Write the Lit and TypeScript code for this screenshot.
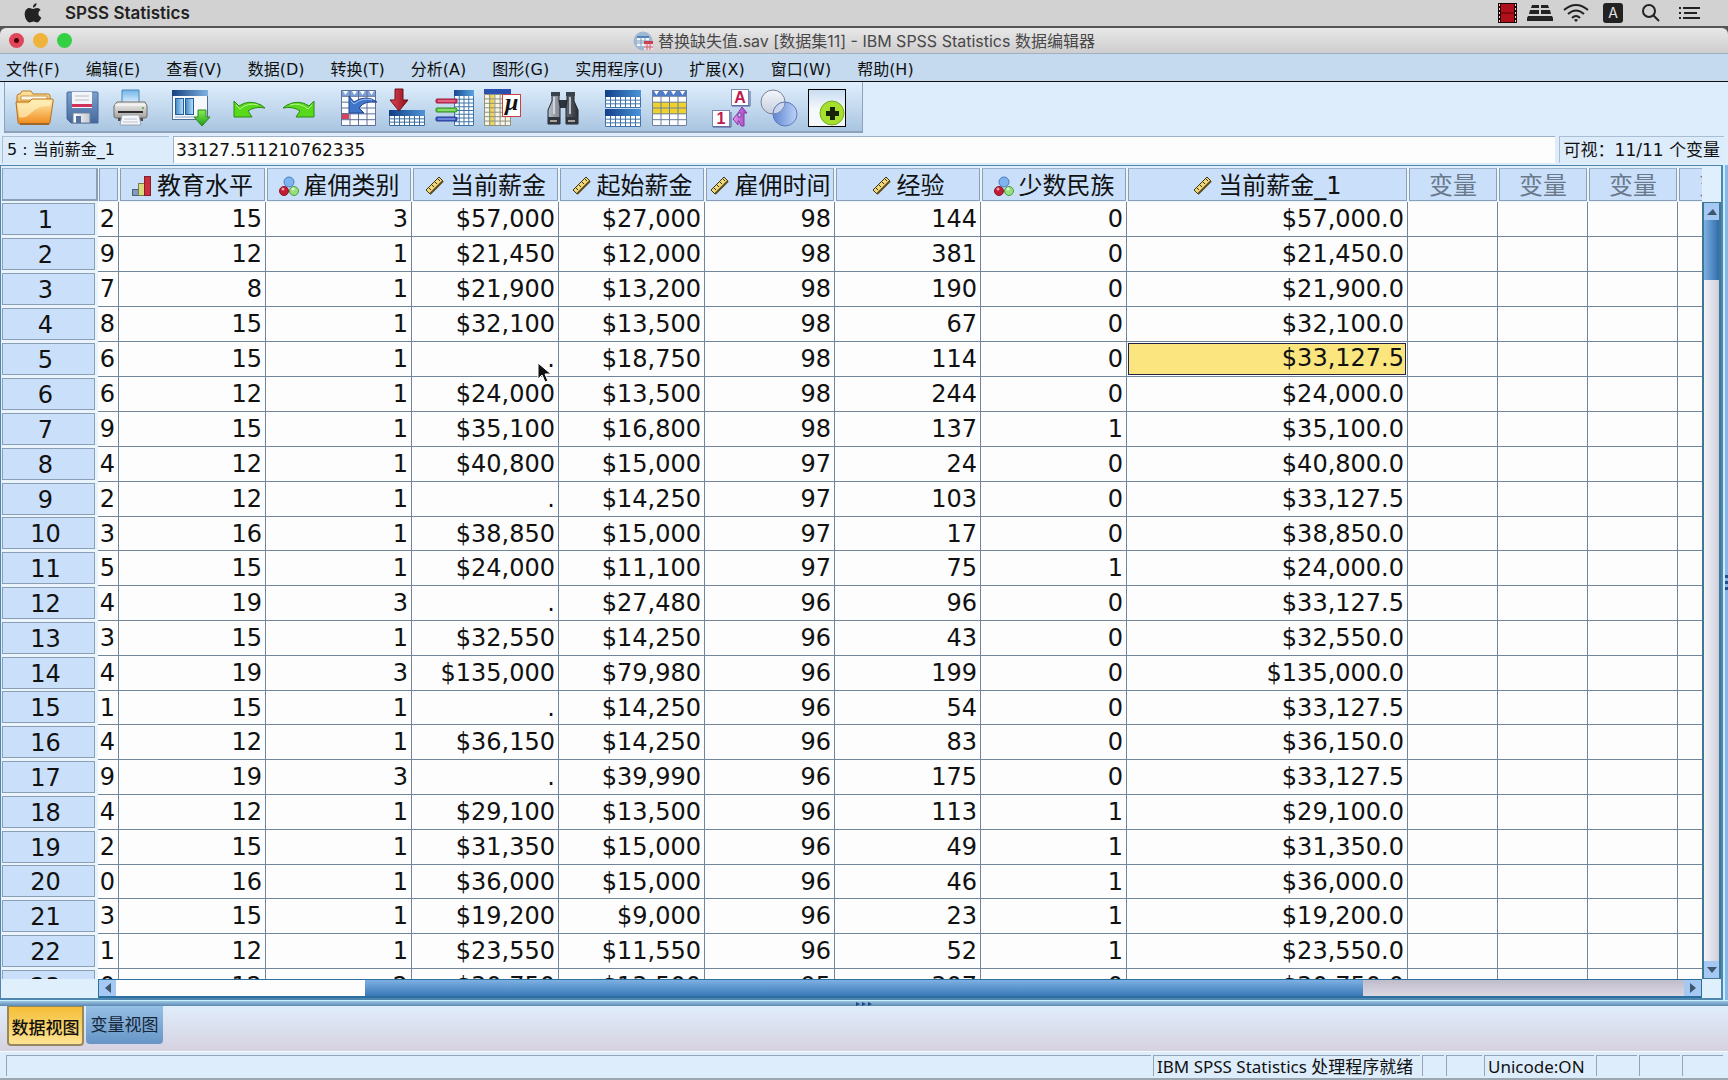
import { LitElement, html, svg, css, type TemplateResult } from "lit";
import { customElement, state } from "lit/decorators.js";
import { classMap } from "lit/directives/class-map.js";
import { styleMap } from "lit/directives/style-map.js";

type Measure = "ordinal" | "nominal" | "scale" | "none";

interface Column {
  name: string;
  measure: Measure;
  width: number;
}

const COLUMNS: Column[] = [
  { name: "", measure: "none", width: 21 },
  { name: "教育水平", measure: "ordinal", width: 147 },
  { name: "雇佣类别", measure: "nominal", width: 146 },
  { name: "当前薪金", measure: "scale", width: 147 },
  { name: "起始薪金", measure: "scale", width: 146 },
  { name: "雇佣时间", measure: "scale", width: 130 },
  { name: "经验", measure: "scale", width: 146 },
  { name: "少数民族", measure: "nominal", width: 146 },
  { name: "当前薪金_1", measure: "scale", width: 281 },
  { name: "变量", measure: "none", width: 90 },
  { name: "变量", measure: "none", width: 90 },
  { name: "变量", measure: "none", width: 90 },
  { name: "变量", measure: "none", width: 90 },
];

const ROWS: string[][] = [
  ["2", "15", "3", "$57,000", "$27,000", "98", "144", "0", "$57,000.0"],
  ["9", "12", "1", "$21,450", "$12,000", "98", "381", "0", "$21,450.0"],
  ["7", "8", "1", "$21,900", "$13,200", "98", "190", "0", "$21,900.0"],
  ["8", "15", "1", "$32,100", "$13,500", "98", "67", "0", "$32,100.0"],
  ["6", "15", "1", ".", "$18,750", "98", "114", "0", "$33,127.5"],
  ["6", "12", "1", "$24,000", "$13,500", "98", "244", "0", "$24,000.0"],
  ["9", "15", "1", "$35,100", "$16,800", "98", "137", "1", "$35,100.0"],
  ["4", "12", "1", "$40,800", "$15,000", "97", "24", "0", "$40,800.0"],
  ["2", "12", "1", ".", "$14,250", "97", "103", "0", "$33,127.5"],
  ["3", "16", "1", "$38,850", "$15,000", "97", "17", "0", "$38,850.0"],
  ["5", "15", "1", "$24,000", "$11,100", "97", "75", "1", "$24,000.0"],
  ["4", "19", "3", ".", "$27,480", "96", "96", "0", "$33,127.5"],
  ["3", "15", "1", "$32,550", "$14,250", "96", "43", "0", "$32,550.0"],
  ["4", "19", "3", "$135,000", "$79,980", "96", "199", "0", "$135,000.0"],
  ["1", "15", "1", ".", "$14,250", "96", "54", "0", "$33,127.5"],
  ["4", "12", "1", "$36,150", "$14,250", "96", "83", "0", "$36,150.0"],
  ["9", "19", "3", ".", "$39,990", "96", "175", "0", "$33,127.5"],
  ["4", "12", "1", "$29,100", "$13,500", "96", "113", "1", "$29,100.0"],
  ["2", "15", "1", "$31,350", "$15,000", "96", "49", "1", "$31,350.0"],
  ["0", "16", "1", "$36,000", "$15,000", "96", "46", "1", "$36,000.0"],
  ["3", "15", "1", "$19,200", "$9,000", "96", "23", "1", "$19,200.0"],
  ["1", "12", "1", "$23,550", "$11,550", "96", "52", "1", "$23,550.0"],
  ["0", "12", "2", "$30,750", "$13,500", "95", "307", "0", "$30,750.0"],
];

const MENUS = [
  "文件(F)", "编辑(E)", "查看(V)", "数据(D)", "转换(T)", "分析(A)",
  "图形(G)", "实用程序(U)", "扩展(X)", "窗口(W)", "帮助(H)",
];

/* Grid lines used by the small spreadsheet pictures in the toolbar. */
const lines = (x: number, y: number, w: number, h: number, cols: number, rows: number, color: string) => {
  const out: TemplateResult[] = [];
  for (let i = 0; i <= cols; i++) {
    const px = x + (w * i) / cols;
    out.push(svg`<path d="M${px} ${y}V${y + h}" stroke=${color} fill="none"/>`);
  }
  for (let j = 0; j <= rows; j++) {
    const py = y + (h * j) / rows;
    out.push(svg`<path d="M${x} ${py}H${x + w}" stroke=${color} fill="none"/>`);
  }
  return out;
};

const big = (body: TemplateResult) =>
  html`<svg width="40" height="40" viewBox="0 0 40 40" aria-hidden="true">${body}</svg>`;

const gradient = (id: string, a: string, b: string, across = false) => svg`
  <linearGradient id=${id} x1="0" y1="0" x2=${across ? 1 : 0} y2=${across ? 0 : 1}>
    <stop offset="0" stop-color=${a}/><stop offset="1" stop-color=${b}/>
  </linearGradient>`;

const openIcon = big(svg`
  <defs>${gradient("fa", "#ffe9a8", "#f2a83c")}${gradient("fb", "#fff0b0", "#f08a1c")}</defs>
  <path d="M2 14V8q0-2 2-2h1l2-3h9l2 3h15q2 0 2 2v9H2z" fill="url(#fa)" stroke="#b57a2c"/>
  <path d="M6 8h26v4H6z" fill="#fff8e4" stroke="#c99a58"/>
  <path d="M1 14h13l3-3h20q2 0 1 3l-3 20q0 2-2 2H5q-2 0-2-2z" fill="url(#fb)" stroke="#b8701c"/>
  <path d="M3 16q12 1 15-3h18l-1 5Q24 17 16 25 10 31 4 29z" fill="#fff3c2" opacity=".65"/>
  <path d="M5 36h29" stroke="#a0662a" stroke-width="2"/>`);

const saveIcon = big(svg`
  <defs>${gradient("sa", "#7da0cc", "#44699f")}${gradient("sb", "#ffffff", "#c3c8d0", true)}</defs>
  <path d="M4 5q0-1 1-1h29q1 0 1 1v30H8l-4-4z" fill="url(#sa)" stroke="#47669a"/>
  <path d="M9 4h20v16H9z" fill="#f4f5f8"/>
  <path d="M12 8h14M12 12h14" stroke="#b8bcc6" stroke-width="1"/>
  <path d="M9 16h20v3H9z" fill="#d0335a"/>
  <path d="M10 25h17v10H10z" fill="url(#sb)" stroke="#6d7f9c"/>
  <path d="M13 28h5v7h-5z" fill="#53709e"/>`);

const printIcon = big(svg`
  <defs>${gradient("pa", "#6fb4ea", "#e8f5ff")}${gradient("pb", "#f2f2f2", "#a5a39e")}</defs>
  <path d="M11 2h17v14H11z" fill="url(#pa)" stroke="#4a86b8"/>
  <path d="M6 14h28l2 4v10q0 2-2 2H5q-2 0-2-2V18z" fill="url(#pb)" stroke="#6b6a66"/>
  <path d="M4 17h31" stroke="#fff"/>
  <path d="M7 23h25v2H7z" fill="#2c2c2c"/>
  <path d="M7 30h25v3H7z" fill="#4a4a48"/>
  <path d="M11 27h17l2 10H9z" fill="#f4f7fb" stroke="#9aa2ac"/>
  <path d="M13 31h13M12 34h15" stroke="#b9c2ce"/>
  <circle cx="32" cy="20" r="1" fill="#4fa43a"/>`);

const recallIcon = big(svg`
  <defs>${gradient("ra", "#17407f", "#7fb2e2", true)}${gradient("rb", "#3c87c6", "#bfe0f7", true)}${gradient("rc", "#8af04e", "#1e9a1e")}</defs>
  <rect x="1.500" y="2.500" width="35" height="29" fill="#f6f8fb" stroke="#4f6f96"/>
  <rect x="1" y="2" width="36" height="6" fill="url(#ra)"/>
  <rect x="4.500" y="10.500" width="8" height="16" fill="url(#rb)" stroke="#1f5c9a"/>
  <rect x="14.500" y="10.500" width="8" height="16" fill="url(#rb)" stroke="#1f5c9a"/>
  <path d="M4 29h19" stroke="#8aa3bf"/>
  <path d="M27 22h8v7h4L31 38l-8-9h4z" fill="url(#rc)" stroke="#2d8422"/>`);

const undoShape = svg`
  <path d="M3 13l5 5Q18 11 30 17l4 3Q24 18 17 23l4 6H3z" fill="#58d91c" stroke="#2c8a17" stroke-linejoin="round"/>
  <path d="M5 17l4 4Q17 14 27 17" fill="none" stroke="#b8f58c"/>`;
const undoIcon = big(svg`<g>${undoShape}</g>`);
const redoIcon = big(svg`<g transform="matrix(-1 0 0 1 38 0)">${undoShape}</g>`);

const gotoCaseIcon = big(svg`
  <rect x="2" y="2" width="35" height="35" fill="#fbfcfe"/>
  <rect x="2" y="2" width="35" height="6" fill="#7ea3dc"/>
  <rect x="2" y="25" width="8" height="6" fill="#d8405c"/>
  ${lines(2.5, 2.5, 34, 35, 4, 6, "#5f6f98")}
  <path d="M4 3h5l-2.500 4zM13 3h5l-2.500 4zM21 3h5l-2.500 4zM30 3h5l-2.500 4z" fill="#fff"/>
  <path d="M10 8v17h15l-5-5Q26 12 38 14 27 6 15 14z" fill="#3f74c8" stroke="#1f4796" stroke-linejoin="round"/>
  <path d="M12 13l3 3Q24 9 33 12" fill="none" stroke="#9fc3f2"/>`);

const gotoVarIcon = big(svg`
  <defs>${gradient("ga", "#0f3d86", "#4f94d6", true)}${gradient("gb", "#e0485a", "#8d0d16", true)}</defs>
  <rect x="2" y="22" width="36" height="16" fill="#fff"/>
  ${lines(2.5, 27.5, 35, 10, 7, 3, "#3a6d9c")}
  <rect x="2" y="22" width="36" height="6" fill="url(#ga)"/>
  <path d="M8 1h8v11h5L12 23 3 12h5z" fill="url(#gb)" stroke="#701018"/>`);

const variablesIcon = big(svg`
  <defs>${gradient("va", "#174a92", "#5ba4e2", true)}</defs>
  <rect x="19" y="2" width="20" height="36" fill="#fff"/>
  ${lines(19.5, 7.5, 19, 30, 4, 8, "#3f74aa")}
  <rect x="19" y="2" width="20" height="6" fill="url(#va)"/>
  <rect x="1" y="11" width="21" height="4" rx="1" fill="#d8305c" stroke="#9d1d3c"/>
  <rect x="1" y="20" width="21" height="4" rx="1" fill="#62cf3e" stroke="#2f8a24"/>
  <rect x="1" y="29" width="21" height="4" rx="1" fill="#3f5fce" stroke="#25398e"/>
  <path d="M3 13h17M3 22h17M3 31h17" stroke="#fff" opacity=".5"/>`);

const statsIcon = big(svg`
  <rect x="1" y="1" width="27" height="36" fill="#f8f6ea"/>
  <rect x="6" y="6" width="5" height="31" fill="#ecd65a"/>
  ${lines(1.5, 6.5, 26, 31, 5, 7, "#8f907e")}
  <rect x="1" y="1" width="27" height="5" fill="#2a50b0"/>
  <rect x="19.500" y="6.500" width="18" height="22" fill="#fff" stroke="#cc4040"/>
  <text x="22" y="22" font-family="Liberation Serif, serif" font-size="24" font-style="italic" font-weight="700" fill="#111">μ</text>`);

const findIcon = big(svg`
  <defs>${gradient("ba", "#b8bfc9", "#2b3038", true)}</defs>
  <rect x="14" y="12" width="12" height="8" fill="#2d333c"/>
  <path d="M9 5h7v8l1 5v18H5V22l4-9zM24 5h7v8l4 9v14H23V18l1-5z" fill="url(#ba)" stroke="#20242b"/>
  <path d="M8 4h9v4H8zM23 4h9v4h-9z" fill="#3a424e"/>
  <path d="M11 9v17M27 9v17" stroke="#e6ebf2" stroke-width="2" opacity=".7"/>
  <path d="M5 29h12v7H5zM23 29h12v7H23z" fill="#30353e"/>
  <path d="M7 33h7M25 33h7" stroke="#a8a29a" stroke-width="2"/>`);

const splitIcon = big(svg`
  <defs>${gradient("spa", "#123f88", "#4a95da", true)}</defs>
  <rect x="2" y="2" width="36" height="18" fill="#fff"/>
  <rect x="2" y="21" width="36" height="18" fill="#fff"/>
  ${lines(2.5, 8.5, 35, 11, 7, 3, "#3f74aa")}
  ${lines(2.5, 27.5, 35, 11, 7, 3, "#3f74aa")}
  <rect x="2" y="2" width="36" height="7" fill="url(#spa)"/>
  <rect x="2" y="21" width="36" height="7" fill="url(#spa)"/>`);

const selectIcon = big(svg`
  <rect x="1" y="2" width="35" height="36" fill="#fbfcfe"/>
  <rect x="1" y="2" width="35" height="6" fill="#4a7ad2"/>
  <rect x="1" y="14" width="35" height="12" fill="#efd22c"/>
  ${lines(1.5, 2.5, 34, 35, 4, 6, "#6d7f9c")}
  <path d="M3 3h5l-2.500 4zM12 3h5l-2.500 4zM20 3h5l-2.500 4zM29 3h5l-2.500 4z" fill="#fff"/>`);

const labelsIcon = big(svg`
  <defs>${gradient("la", "#e29af0", "#a53cc0", true)}</defs>
  <rect x="20.500" y="1.500" width="17" height="16" fill="#fff" stroke="#7c88b4"/>
  <path d="M21 18h18V3" stroke="#4c5a92" stroke-width="1" fill="none"/>
  <text x="29" y="15" text-anchor="middle" font-family="Liberation Sans, sans-serif" font-size="16" font-weight="700" fill="#c01850">A</text>
  <rect x="1.500" y="22.500" width="17" height="16" fill="#fff" stroke="#7c88b4"/>
  <path d="M2 39h18V24" stroke="#4c5a92" stroke-width="1" fill="none"/>
  <text x="10" y="36" text-anchor="middle" font-family="Liberation Sans, sans-serif" font-size="16" font-weight="700" fill="#c01850">1</text>
  <path d="M31 19l5 6h-3v13h-3l-2-5h-1v4l-5-6 5-6v4h3v-4h-3z" fill="url(#la)" stroke="#8438a0"/>`);

const setsIcon = big(svg`
  <defs>${gradient("na", "#f4f7fb", "#c6cedd")}${gradient("nb", "#5f86d0", "#bcd2f8", true)}</defs>
  <circle cx="14" cy="14" r="12" fill="url(#na)" stroke="#7a8296"/>
  <circle cx="26" cy="26" r="12" fill="url(#nb)" stroke="#5d7ac0"/>
  <path d="M14 26A12 12 0 0 1 26 14 12 12 0 0 1 14 26z" fill="#eef2f8" stroke="#6d7fa8" opacity=".7"/>`);

const addIcon = big(svg`
  <defs>${gradient("aa", "#c8ddf2", "#f2f6fb")}</defs>
  <rect x="1.500" y="1.500" width="37" height="37" fill="#f6f9fc" stroke="#000"/>
  <rect x="2" y="2" width="36" height="18" fill="url(#aa)"/>
  <circle cx="25" cy="25" r="12" fill="#a6df2c" stroke="#6fae22"/>
  <path d="M23 19h5v4h4v5h-4v4h-5v-4h-4v-5h4z" fill="#182408"/>`);

const TOOLS: { label: string; icon: TemplateResult }[][] = [
  [{ label: "打开", icon: openIcon }, { label: "保存", icon: saveIcon }, { label: "打印", icon: printIcon }],
  [{ label: "重新调用对话框", icon: recallIcon }],
  [{ label: "撤消", icon: undoIcon }, { label: "重做", icon: redoIcon }],
  [
    { label: "转到个案", icon: gotoCaseIcon },
    { label: "转到变量", icon: gotoVarIcon },
    { label: "变量信息", icon: variablesIcon },
    { label: "描述统计", icon: statsIcon },
  ],
  [{ label: "查找", icon: findIcon }],
  [{ label: "拆分文件", icon: splitIcon }, { label: "选择个案", icon: selectIcon }],
  [{ label: "值标签", icon: labelsIcon }, { label: "变量集", icon: setsIcon }, { label: "定制工具栏", icon: addIcon }],
];

const MEASURE_ICONS: Record<Measure, TemplateResult | null> = {
  none: null,
  ordinal: html`<svg width="20" height="20" viewBox="0 0 20 20" aria-hidden="true">
    <rect x="0.500" y="13.500" width="6" height="6" fill="#7f9cc0" stroke="#4f5f74"/>
    <rect x="6.500" y="7.500" width="6" height="12" fill="#d8dc7e" stroke="#7b7a4a"/>
    <rect x="12.500" y="0.500" width="6" height="19" fill="#cf2c3c" stroke="#7d2430"/></svg>`,
  nominal: html`<svg width="20" height="20" viewBox="0 0 20 20" aria-hidden="true">
    <circle cx="10" cy="6" r="5" fill="#7fb4f0" stroke="#4c7cc0"/>
    <circle cx="5" cy="15" r="4.500" fill="#c41c34" stroke="#861424"/>
    <circle cx="15" cy="15" r="4.500" fill="#94e07c" stroke="#4f9a44"/>
    <circle cx="4" cy="13" r="1.500" fill="#f0a0aa"/><circle cx="14" cy="13" r="1.500" fill="#e2fad8"/></svg>`,
  scale: html`<svg width="20" height="20" viewBox="0 0 20 20" aria-hidden="true">
    <path d="M1 14L14 1l4 4L5 18z" fill="#f0d878" stroke="#3c3414"/>
    <path d="M4 12l2 2M7 9l2 2M10 6l2 2M13 3l2 2" stroke="#3c3414"/>
    <path d="M5 18L18 5" stroke="#5a4a1c" stroke-width="2"/></svg>`,
};

@customElement("app-root")
export class AppRoot extends LitElement {
  static styles = css`
    :host {
      display: block;
      --text: "DejaVu Sans", "Noto Sans CJK SC", sans-serif;
      --line: #71869a;
      --pale: #deedfb;
      font-family: var(--text);
      font-size: 16px;
      color: #111;
    }
    * { box-sizing: border-box; }
    button { font: inherit; color: inherit; border: 0; background: none; padding: 0; }
    svg { display: block; flex: none; }

    .app { display: flex; flex-direction: column; height: 100vh; overflow: hidden; background: var(--pale); }

    .desktop-bar {
      display: flex; align-items: center; justify-content: space-between; flex: none;
      height: 28px; padding: 0 27px 0 24px; background: #d2d2d2; border-bottom: 2px solid #555;
      font: 600 17px/26px Inter, "Noto Sans CJK SC", sans-serif; color: #222;
    }
    .desktop-left { display: flex; align-items: center; gap: 23px; }
    .desktop-right { display: flex; align-items: center; gap: 10px; }
    .spaced { display: flex; align-items: center; gap: 18px; margin-left: 4px; }

    .title-bar {
      display: grid; grid-template-columns: 1fr auto 1fr; align-items: center; flex: none;
      height: 26px; padding: 0 9px; background: linear-gradient(#e8e8e8, #cfcdcf);
      border-bottom: 1px solid #9fb0c0; border-radius: 6px 6px 0 0;
    }
    .title-wrap { background: #555; flex: none; }
    .lights { display: flex; gap: 9px; }
    .light { width: 15px; height: 15px; border-radius: 50%; display: grid; place-items: center; }
    .close { background: #e0465a; }
    .close::after { content: ""; width: 5px; height: 5px; border-radius: 50%; background: #4a0008; }
    .minimise { background: #efb23a; }
    .zoom { background: #34d044; }
    .title {
      display: flex; align-items: center; gap: 5px; margin: 0; white-space: pre;
      font: 400 16px/24px Inter, "Noto Sans CJK SC", sans-serif; color: #484848;
    }

    .menu-bar {
      display: flex; flex: none; align-items: center; gap: 26px; height: 28px; padding: 0 6px;
      background: #c5daee; border-bottom: 1px solid #111; white-space: nowrap;
    }

    .tool-strip { display: flex; flex: none; height: 51px; }
    .tools {
      display: flex; align-items: center; gap: 20px; padding: 2px 15px 0 10px; margin-left: 4px;
      background: linear-gradient(#e0effd, #a9c5e1);
      border: solid #8da2b8; border-width: 0 1px 2px 1px;
    }
    .tool-group { display: flex; gap: 8px; }
    .tool { width: 40px; height: 40px; }

    .editor {
      display: flex; flex: none; gap: 4px; height: 32px; padding: 3px 4px 2px 2px;
      font-size: 17px; line-height: 26px; white-space: nowrap;
    }
    .cell-name { width: 167px; padding: 0 4px; border: solid #a9bed2; border-width: 1px 0 0 1px; background: #ddecfa; font-size: 16px; }
    .cell-value {
      flex: 1; min-width: 0; font: inherit; color: inherit; padding: 0 2px; margin: 0; outline: 0;
      border: solid #9db2c6; border-width: 1px 0 0 1px; background: #fdfdfd;
    }
    .visible { padding: 0 4px; border: solid #a9bed2; border-width: 1px 0 0 1px; background: #ddecfa; }

    .body { display: flex; flex: 1; min-height: 0; }
    .pane {
      display: grid; flex: 1; min-width: 0; grid-template: minmax(0, 1fr) 19px / minmax(0, 1fr) 19px;
      border: solid #4f86b0; border-width: 1px 2px 2px 1px; padding-left: 1px;
      background: #dff0fc;
    }
    .viewport { overflow: hidden; padding-top: 2px; }
    table { border-collapse: separate; border-spacing: 0; table-layout: fixed; font-size: 24px; line-height: 32px; }
    th, td { padding: 0; font-weight: 400; white-space: nowrap; overflow: hidden; }
    thead tr { height: 34px; }
    tbody tr { height: 35px; }
    tbody tr:nth-child(5n) { height: 34px; }
    thead th { padding: 0 1px 1px 1px; background: #e9f4fd; }
    .head {
      display: flex; align-items: center; justify-content: center; gap: 5px; height: 33px; padding-top: 2px;
      background: #c9dffa; border: 1px solid #8a9eb4; border-top-color: #9cb0c6;
    }
    thead .corner { padding: 0 0 1px; border: 0; background: #e9f4fd; }
    .corner .head { border-width: 1px 2px 2px 1px; }
    .unused { color: #6a7a8c; }
    tbody th { background: #e9f4fd; padding: 0 3px 2px 0; }
    .case {
      display: block; height: 32px; line-height: 32px; text-align: center; background: #c9dffa;
      border: 1px solid #8a9eb4; overflow: hidden; padding-right: 6px;
    }
    td {
      background: #fdfdfd; border: solid var(--line); border-width: 0 1px 1px 0;
      text-align: right; padding-right: 3px; vertical-align: middle; line-height: 28px;
    }
    td.active { padding: 1px 0; }
    td.active span { display: block; height: 32px; line-height: 28px; margin: 0 1px; padding-right: 1px; background: #fae57e; border: 1px solid #22224a; }

    .vscroll { display: flex; flex-direction: column; margin-top: 36px; border: solid #3f7896; border-width: 1px 2px 1px 2px; background: linear-gradient(90deg, #f4f3f8, #cfcfdc); }
    .hscroll { display: flex; margin-left: 96px; border: solid #2b6f9e; border-width: 1px 1px 2px 1px; background: linear-gradient(#bfbccb, #dcd8e2); }
    .arrow { display: grid; place-items: center; flex: none; background: #a5c9f3; }
    .vscroll .arrow { height: 17px; }
    .hscroll .arrow { width: 17px; }
    .before { background: #fdfdfd; }
    .vthumb { background: linear-gradient(90deg, #7fb0e0, #2f6cae); }
    .hthumb { background: linear-gradient(#7db0e2, #3878b8); }
    .divider { display: grid; place-items: center; flex: none; width: 5px; border-left: 2px solid #c8f0fa; background: #84b8ea; }
    .splitter { display: grid; place-items: center; flex: none; height: 6px; border-top: 1px solid #c8f0fa; background: linear-gradient(#9cc6e4, #5c88b2); }

    .views { display: flex; flex: none; align-items: flex-start; gap: 2px; height: 45px; padding: 0 7px; background: linear-gradient(#dfedfb, #d6d1e0); font-size: 17px; line-height: 24px; }
    .view { width: 77px; height: 38px; border-radius: 0 0 4px 4px; background: linear-gradient(#96bfe4, #6695c6); color: #16263a; }
    .view.current { height: 40px; padding-top: 4px; background: linear-gradient(#f5bf38, #fde394); border: 2px solid #95885c; border-top-width: 1px; color: #111; font-weight: 500; }

    .status { display: flex; flex: none; gap: 2px; height: 29px; padding: 3px 5px 2px 6px; border-top: 1px solid #f4fafe; border-bottom: 2px solid #9aa6b0; font: 400 17px/22px "Noto Sans", "Noto Sans CJK SC", sans-serif; white-space: nowrap; }
    .slot { flex: none; padding: 0 3px; border: solid #93a5b6; border-width: 1px 0 0 1px; }
    .grow { flex: 1; }
    .processor { width: 267px; }
    .slot-s { width: 22px; }
    .slot-m { width: 36px; }
    .slot-l { width: 41px; }
    .unicode { width: 110px; }

    .pointer { position: absolute; left: 537px; top: 362px; pointer-events: none; }
  `;

  @state() private view = 0;
  @state() private active = { row: 4, column: 8 };

  private renderHead(c: Column) {
    return html`<th scope="col">
      <div class=${classMap({ head: true, unused: c.name === "变量" })}>${MEASURE_ICONS[c.measure]}<span>${c.name}</span></div>
    </th>`;
  }

  private renderRow(row: string[], r: number) {
    return html`<tr>
      <th scope="row"><span class="case">${r + 1}</span></th>
      ${COLUMNS.map((_, c) => {
        const on = r === this.active.row && c === this.active.column;
        return html`<td class=${classMap({ active: on })} @click=${() => (this.active = { row: r, column: c })}>${on ? html`<span>${row[c]}</span>` : row[c] ?? ""}</td>`;
      })}
    </tr>`;
  }

  private arrow(label: string, path: string) {
    return html`<button class="arrow" aria-label=${label}>
      <svg width="10" height="10" viewBox="0 0 10 10" aria-hidden="true"><path d=${path} fill="#3f566e"/></svg>
    </button>`;
  }

  render() {
    const total = 96 + COLUMNS.reduce((sum, c) => sum + c.width, 0);
    return html`<div class="app">
      <header class="desktop-bar">
        <div class="desktop-left">
          <svg width="18" height="20" viewBox="0 0 18 20" aria-hidden="true">
            <path d="M12.500 0Q12.800 3.600 9 4.700 8.700 1.200 12.500 0z" fill="#222"/>
            <path d="M9 5.900c1.300 0 2.200-.9 4-.9 1.600 0 2.900.9 3.600 2-3.200 2-2.700 6 .7 7.400-.8 2.300-2.400 5-4.200 5-1.500 0-2-.8-3.700-.8s-2.300.8-3.700.8C3.200 19.400.7 15 .7 11.200.7 7.400 2.900 5 5.300 5c1.600 0 2.500.9 3.700.9z" fill="#222"/>
          </svg>
          <span>SPSS Statistics</span>
        </div>
        <div class="desktop-right">
          <svg width="19" height="20" viewBox="0 0 19 20" aria-hidden="true">
            <rect width="19" height="20" fill="#1c0606"/><rect x="3" y="1" width="13" height="18" fill="#b0101c"/>
            <path d="M3 10h13" stroke="#500"/><path d="M1.500 1v19M17.500 1v19" stroke="#e8d8d8" stroke-dasharray="2 2"/>
          </svg>
          <svg width="26" height="18" viewBox="0 0 26 18" aria-hidden="true">
            <path d="M5 1h7v3H4zM14 1h7l1 3h-8zM3 6h9v4H2zM14 6h9l1 4H14zM1 12h24l1 2v3H0v-3z" fill="#222"/>
          </svg>
          <svg width="26" height="20" viewBox="0 0 26 20" aria-hidden="true">
            <path d="M1 7Q13-3 25 7M5 11q8-7 16 0M9 15q4-4 8 0" fill="none" stroke="#222" stroke-width="2"/>
            <path d="M11 17q2-2 4 0l-2 2z" fill="#222"/>
          </svg>
          <div class="spaced">
            <svg width="20" height="20" viewBox="0 0 20 20" aria-hidden="true">
              <rect width="20" height="20" rx="3" fill="#222"/>
              <text x="10" y="15" text-anchor="middle" font-family="Inter, sans-serif" font-size="14" font-weight="400" fill="#e4e4e4">A</text>
            </svg>
            <svg width="20" height="20" viewBox="0 0 20 20" aria-hidden="true">
              <circle cx="8" cy="8" r="6" fill="none" stroke="#222" stroke-width="2"/><path d="M12 12l6 6" stroke="#222" stroke-width="2"/>
            </svg>
            <svg width="22" height="14" viewBox="0 0 22 14" aria-hidden="true">
              <path d="M0 2h2M0 7h2M0 12h2M4 2h17M5 7h13M4 12h17" stroke="#222" stroke-width="2"/>
            </svg>
          </div>
        </div>
      </header>

      <div class="title-wrap">
        <div class="title-bar">
          <div class="lights">
            <button class="light close" aria-label="关闭"></button>
            <button class="light minimise" aria-label="最小化"></button>
            <button class="light zoom" aria-label="缩放"></button>
          </div>
          <h1 class="title"><svg width="20" height="20" viewBox="0 0 20 20" aria-hidden="true">
            <circle cx="10" cy="10" r="9" fill="#9db8d4" stroke="#9fb6d0"/>
            <rect x="4" y="5" width="12" height="10" fill="#f4f7fb"/><path d="M4 5h12v2H4z" fill="#4f7fb8"/>
            <path d="M4 10h12M4 12h12M8 6v9M12 6v9" stroke="#7f9ab8"/>
            <path d="M11 10h9v9h-9z" fill="#f2dde0"/><path d="M11 10h9v3h-9z" fill="#c84050"/>
            <path d="M11 16h9M14 12v7M17 12v7" stroke="#c86070"/>
          </svg>替换缺失值.sav [数据集11] - IBM SPSS Statistics 数据编辑器</h1>
          <span></span>
        </div>
      </div>

      <nav class="menu-bar">${MENUS.map((m) => html`<button>${m}</button>`)}</nav>

      <div class="tool-strip">
        <div class="tools" role="toolbar">
          ${TOOLS.map((g) => html`<div class="tool-group">${g.map((t) => html`<button class="tool" aria-label=${t.label}>${t.icon}</button>`)}</div>`)}
        </div>
      </div>

      <div class="editor">
        <label class="cell-name" for="cell">5 : 当前薪金_1</label>
        <input class="cell-value" id="cell" type="text" value="33127.511210762335" />
        <span class="visible">可视：11/11 个变量</span>
      </div>

      <div class="body">
        <main class="pane">
          <div class="viewport">
            <table style=${styleMap({ width: `${total}px` })}>
              <colgroup>
                <col style=${styleMap({ width: "96px" })} />
                ${COLUMNS.map((c) => html`<col style=${styleMap({ width: `${c.width}px` })} />`)}
              </colgroup>
              <thead><tr><td class="corner"><div class="head"></div></td>${COLUMNS.map((c) => this.renderHead(c))}</tr></thead>
              <tbody>${ROWS.map((row, r) => this.renderRow(row, r))}</tbody>
            </table>
          </div>
          <div class="vscroll">
            ${this.arrow("向上滚动", "M0 8L6 2l4 6z")}
            <div class="vthumb" style=${styleMap({ flexGrow: "60" })}></div>
            <div style=${styleMap({ flexGrow: "680" })}></div>
            ${this.arrow("向下滚动", "M0 2h10L5 8z")}
          </div>
          <div class="hscroll">
            ${this.arrow("向左滚动", "M8 0v10L2 5z")}
            <div class="before" style=${styleMap({ flexGrow: "249" })}></div>
            <div class="hthumb" style=${styleMap({ flexGrow: "999" })}></div>
            <div style=${styleMap({ flexGrow: "321" })}></div>
            ${this.arrow("向右滚动", "M2 0v10L8 5z")}
          </div>
        </main>
        <div class="divider">
          <svg width="3" height="16" viewBox="0 0 3 16" aria-hidden="true"><path d="M0 0h3v3H0zM0 6h3v3H0zM0 12h3v3H0z" fill="#1f4f94"/></svg>
        </div>
      </div>
      <div class="splitter">
        <svg width="16" height="4" viewBox="0 0 16 4" aria-hidden="true"><path d="M0 0l4 2-4 2zM6 0l4 2-4 2zM12 0l4 2-4 2z" fill="#1f4a84"/></svg>
      </div>

      <div class="views">
        ${["数据视图", "变量视图"].map((v, i) => html`<button class=${classMap({ view: true, current: this.view === i })} @click=${() => (this.view = i)}>${v}</button>`)}
      </div>

      <footer class="status">
        <span class="slot grow"></span>
        <span class="slot processor">IBM SPSS Statistics 处理程序就绪</span>
        <span class="slot slot-s"></span>
        <span class="slot slot-m"></span>
        <span class="slot unicode">Unicode:ON</span>
        <span class="slot slot-l"></span>
        <span class="slot slot-l"></span>
        <span class="slot slot-l"></span>
      </footer>

      <svg class="pointer" width="15" height="21" viewBox="0 0 15 21" aria-hidden="true">
        <path d="M1 1v16l4-4 3 7 3-1-3-7h6z" fill="#111" stroke="#fff"/>
      </svg>
    </div>`;
  }
}
